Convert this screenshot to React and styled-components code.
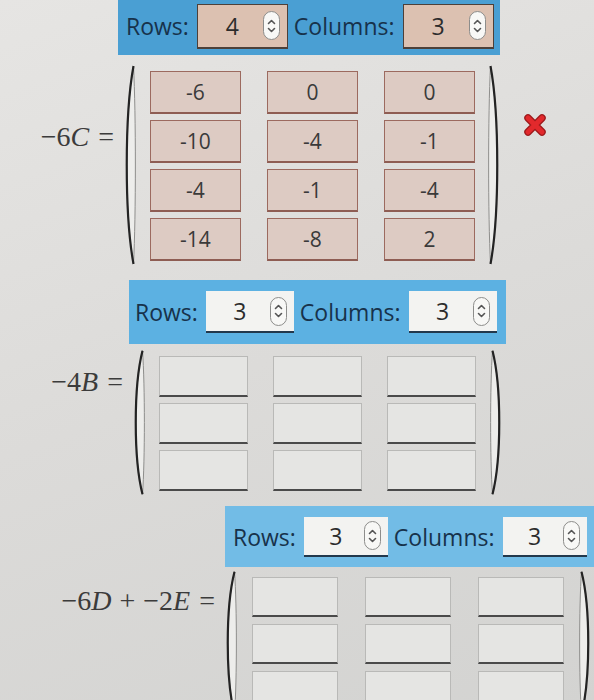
import React from 'react'
import styled, { createGlobalStyle } from 'styled-components'

const GlobalStyle = createGlobalStyle`
  html, body {
    margin: 0;
    padding: 0;
  }
  body {
    width: 594px;
    height: 700px;
    overflow: hidden;
    background: linear-gradient(160deg, #e6e5e3 0%, #dcdbd9 50%, #d3d3d1 100%);
    font-family: "Open Sans", "Liberation Sans", sans-serif;
  }
`

const Page = styled.main`
  display: flex;
  flex-direction: column;
  width: 594px;
`

const Block = styled.section`
  display: flex;
  flex-direction: column;
  margin-top: ${props => props.$top}px;
`

const Toolbar = styled.div`
  display: flex;
  align-items: center;
  box-sizing: border-box;
  margin-left: ${props => props.$left}px;
  width: ${props => props.$width}px;
  height: ${props => props.$height}px;
  padding-left: ${props => props.$pad}px;
  background: ${props => props.$bg};
  flex-shrink: 0;
`

const FieldLabel = styled.span`
  font-size: 23px;
  color: #17324b;
  margin-right: 8px;
`

const SpinBox = styled.div`
  display: flex;
  align-items: center;
  box-sizing: border-box;
  width: ${props => props.$width}px;
  height: ${props => props.$height}px;
  margin-right: 6px;
  background: ${props => (props.$invalid ? '#dcc1b1' : '#f3f3f1')};
  border: ${props => (props.$invalid ? '1.5px solid #4d4039' : 'none')};
  border-bottom: 2px solid ${props => (props.$invalid ? '#4d4039' : '#22384c')};
`

const SpinValue = styled.span`
  flex: 1;
  text-align: center;
  font-size: 23px;
  color: #2c2c2c;
  padding-left: 4px;
`

const SpinButton = styled.span`
  display: flex;
  align-items: center;
  justify-content: center;
  box-sizing: border-box;
  width: 17px;
  height: 29px;
  margin-right: 7px;
  border: 1.5px solid #8d8d8b;
  border-radius: 9px;
  background: #f8f8f6;
`

const MatrixRow = styled.div`
  display: flex;
  align-items: flex-start;
  margin-top: ${props => props.$gap}px;
`

const MathLabel = styled.div`
  box-sizing: border-box;
  width: ${props => props.$width}px;
  padding-top: ${props => props.$offset}px;
  padding-right: 10px;
  text-align: right;
  font-family: "Liberation Serif", "Times New Roman", serif;
  font-size: 28px;
  color: #3b3b3b;
  white-space: nowrap;
  i {
    font-style: italic;
  }
`

const Eq = styled.span`
  margin-left: 9px;
`

const Op = styled.span`
  margin: 0 8px;
`

const ParenBox = styled.svg`
  display: block;
  width: 12px;
  height: ${props => props.$h}px;
  flex-shrink: 0;
  transform: ${props => (props.$right ? 'scaleX(-1)' : 'none')};
  margin: 0 ${props => props.$inner}px 0 ${props => props.$outer}px;
`

const Grid = styled.div`
  display: grid;
  grid-template-columns: repeat(3, ${props => props.$cellW}px);
  grid-auto-rows: ${props => props.$cellH}px;
  column-gap: ${props => props.$colGap}px;
  row-gap: ${props => props.$rowGap}px;
  padding: 6px 0 4px;
`

const Cell = styled.div`
  display: flex;
  align-items: center;
  justify-content: center;
  box-sizing: border-box;
  font-size: 21px;
  color: #3a3a3a;
  background: ${props => (props.$wrong ? '#ddcbc3' : '#e5e5e3')};
  border: 1.5px solid ${props => (props.$wrong ? '#9c6a5f' : '#b9b9b7')};
  border-bottom: 2px solid ${props => (props.$wrong ? '#8e5d53' : '#4a4a4a')};
`

const Status = styled.svg`
  width: 24px;
  height: 24px;
  margin-left: 23px;
  margin-top: ${props => props.$offset}px;
  flex-shrink: 0;
`

const Spinner = () => (
  <SpinButton>
    <svg width="9" height="18" viewBox="0 0 9 18">
      <path d="M1.5 6.5 L4.5 3.5 L7.5 6.5 M1.5 11.5 L4.5 14.5 L7.5 11.5" fill="none" stroke="#555" strokeWidth="1.6" strokeLinecap="round" strokeLinejoin="round" />
    </svg>
  </SpinButton>
)

const Paren = ({ right, outer, inner, h }) => (
  <ParenBox viewBox="0 0 12 200" preserveAspectRatio="none" $right={right} $outer={outer} $inner={inner} $h={h}>
    <path d="M9.5 1 C0.5 50 0.5 150 9.5 199 C12 150 12 50 9.5 1 Z" fill="#ededeb" stroke="#8e8e8c" strokeWidth="1" vectorEffect="non-scaling-stroke" />
    <path d="M9.5 1 C0.5 50 0.5 150 9.5 199" fill="none" stroke="#232323" strokeWidth="2.2" vectorEffect="non-scaling-stroke" />
  </ParenBox>
)

const SizeBar = ({ rows, cols, invalid, box }) => (
  <>
    <FieldLabel>Rows:</FieldLabel>
    <SpinBox $invalid={invalid} $width={box.w} $height={box.h}>
      <SpinValue>{rows}</SpinValue>
      <Spinner />
    </SpinBox>
    <FieldLabel>Columns:</FieldLabel>
    <SpinBox $invalid={invalid} $width={box.w} $height={box.h}>
      <SpinValue>{cols}</SpinValue>
      <Spinner />
    </SpinBox>
  </>
)

const answerC = [
  ['-6', '0', '0'],
  ['-10', '-4', '-1'],
  ['-4', '-1', '-4'],
  ['-14', '-8', '2'],
]

const blank = Array.from({ length: 9 }, (_, i) => i)

// matrix height = padding + rows + gaps
const parenHeight = (rows, cellH, rowGap) => 10 + rows * cellH + (rows - 1) * rowGap

export default function App() {
  return (
    <Page>
      <GlobalStyle />

      <Block $top={-3}>
        <Toolbar $left={118} $width={382} $height={58} $pad={8} $bg="#4a9fd3">
          <SizeBar rows="4" cols="3" invalid box={{ w: 91, h: 45 }} />
        </Toolbar>
        <MatrixRow $gap={10}>
          <MathLabel $width={124} $offset={56}>
            −6<i>C</i><Eq>=</Eq>
          </MathLabel>
          <Paren outer={0} inner={14} h={parenHeight(4, 43, 6)} />
          <Grid $cellW={91} $cellH={43} $colGap={26} $rowGap={6}>
            {answerC.flat().map((v, i) => (
              <Cell key={i} $wrong>{v}</Cell>
            ))}
          </Grid>
          <Paren right outer={13} inner={0} h={parenHeight(4, 43, 6)} />
          <Status $offset={48} viewBox="0 0 24 24">
            <path d="M5 5 L19 19 M19 5 L5 19" stroke="#9e1a1c" strokeWidth="7.5" strokeLinecap="round" />
            <path d="M5 5 L19 19 M19 5 L5 19" stroke="#e2292c" strokeWidth="5" strokeLinecap="round" />
          </Status>
        </MatrixRow>
      </Block>

      <Block $top={15}>
        <Toolbar $left={129} $width={377} $height={64} $pad={6} $bg="#5cb1e2">
          <SizeBar rows="3" cols="3" box={{ w: 88, h: 42 }} />
        </Toolbar>
        <MatrixRow $gap={6}>
          <MathLabel $width={133} $offset={16}>
            −4<i>B</i><Eq>=</Eq>
          </MathLabel>
          <Paren outer={0} inner={14} h={parenHeight(3, 41, 6)} />
          <Grid $cellW={89} $cellH={41} $colGap={25} $rowGap={6}>
            {blank.map(i => <Cell key={i} />)}
          </Grid>
          <Paren right outer={14} inner={0} h={parenHeight(3, 41, 6)} />
        </MatrixRow>
      </Block>

      <Block $top={11}>
        <Toolbar $left={225} $width={380} $height={61} $pad={8} $bg="#72bce6">
          <SizeBar rows="3" cols="3" box={{ w: 84, h: 40 }} />
        </Toolbar>
        <MatrixRow $gap={4}>
          <MathLabel $width={225} $offset={14}>
            −6<i>D</i><Op>+</Op>−2<i>E</i><Eq>=</Eq>
          </MathLabel>
          <Paren outer={0} inner={15} h={parenHeight(3, 40, 7)} />
          <Grid $cellW={86} $cellH={40} $colGap={27} $rowGap={7}>
            {blank.map(i => <Cell key={i} />)}
          </Grid>
          <Paren right outer={15} inner={0} h={parenHeight(3, 40, 7)} />
        </MatrixRow>
      </Block>
    </Page>
  )
}
